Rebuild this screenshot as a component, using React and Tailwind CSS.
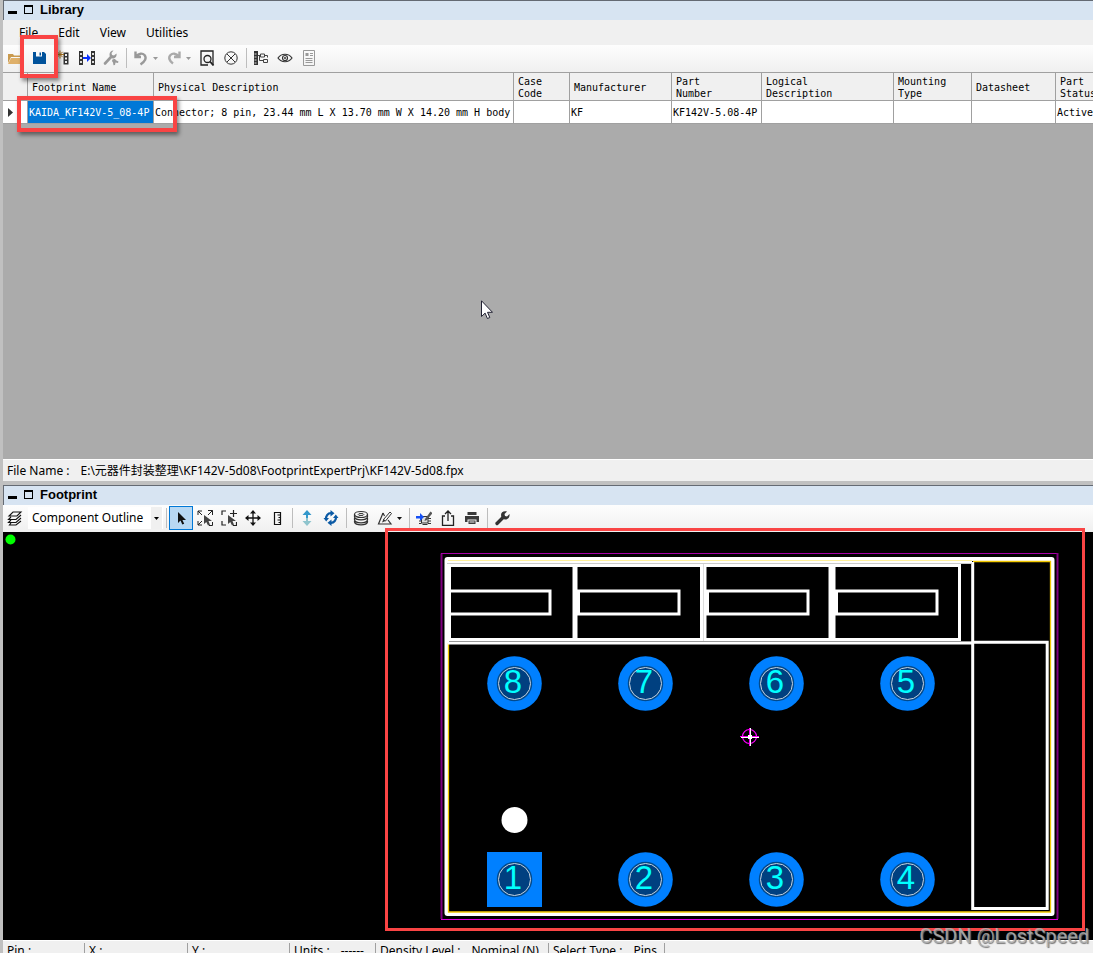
import { useState } from 'react';
import clsx from 'clsx';

const columns = [
  { key: 'name', label: ['Footprint Name'], width: 'w-[126px]' },
  { key: 'description', label: ['Physical Description'], width: 'w-[360px]' },
  { key: 'caseCode', label: ['Case', 'Code'], width: 'w-[56px]' },
  { key: 'manufacturer', label: ['Manufacturer'], width: 'w-[102px]' },
  { key: 'partNumber', label: ['Part', 'Number'], width: 'w-[90px]' },
  { key: 'logical', label: ['Logical', 'Description'], width: 'w-[132px]' },
  { key: 'mounting', label: ['Mounting', 'Type'], width: 'w-[78px]' },
  { key: 'datasheet', label: ['Datasheet'], width: 'w-[84px]' },
  { key: 'status', label: ['Part', 'Status'], width: 'w-[80px]' },
];

const rows = [
  {
    name: 'KAIDA_KF142V-5_08-4P',
    description: 'Connector; 8 pin, 23.44 mm L X 13.70 mm W X 14.20 mm H body',
    manufacturer: 'KF',
    partNumber: 'KF142V-5.08-4P',
    status: 'Active',
  },
];

// x, y are pad centres in canvas units
const pads = [
  { pin: '8', x: 514.5, y: 683.5 },
  { pin: '7', x: 645.5, y: 683.5 },
  { pin: '6', x: 776.5, y: 683.5 },
  { pin: '5', x: 907.5, y: 683.5 },
  { pin: '1', x: 514.5, y: 879.5, square: true },
  { pin: '2', x: 645.5, y: 879.5 },
  { pin: '3', x: 776.5, y: 879.5 },
  { pin: '4', x: 907.5, y: 879.5 },
];

const cells = [
  { x: 449.5, w: 124.5, tab: 449.5, tabW: 100.5 },
  { x: 576, w: 125.5, tab: 578.5, tabW: 100.5 },
  { x: 705, w: 125, tab: 707.5, tabW: 100.5 },
  { x: 834, w: 125.5, tab: 836.5, tabW: 100.5 },
];

function Icon({ children, className }) {
  return (
    <svg viewBox="0 0 16 16" className={clsx('h-4 w-4 shrink-0', className)} fill="none" aria-hidden="true">
      {children}
    </svg>
  );
}

const icons = {
  open: (
    <>
      <path d="M1 4h5l1 1.500h6V7H4L1 13z" fill="#c99a4e" />
      <path d="M4 8h12l-3 6H1z" fill="#dfb06a" />
    </>
  ),
  save: <path d="M2 2h11l2 2v10H2zM5 2v4.500h6V2zM8.500 2.500v3h1.500v-3z" fill="#00529b" fillRule="evenodd" />,
  newLib: (
    <>
      <path d="M8.500 2.500h5v12h-5z" fill="#333" />
      <path d="M10 4h2v2h-2zM10 7.500h2v2h-2zM10 11h2v2h-2z" fill="#eee" />
      <path d="M5 .5v8M1 4.500h8M2.300 1.800l5.400 5.400M7.700 1.800L2.300 7.200" stroke="#a8701c" />
    </>
  ),
  match: (
    <>
      <path d="M0 1h4v14H0zM12 1h4v14h-4z" fill="#333" />
      <path d="M1 3h2v2H1zM1 7h2v2H1zM1 11h2v2H1zM13 3h2v2h-2zM13 7h2v2h-2zM13 11h2v2h-2z" fill="#ddd" />
      <path d="M4 7h4V4l4 4-4 4V9H4z" fill="#0a32ff" />
    </>
  ),
  fix: (
    <>
      <path d="M2 13.500L8 7" stroke="#999" strokeWidth="2.600" strokeLinecap="round" />
      <path d="M10.500.5L8.500 3l.5 2 2 .5 2.500-2c.5 2.500-1 5-3.500 5S6.500 6.500 6.500 4.500 8 .5 10.500.5z" fill="#999" />
      <path d="M9.500 9.500c1.500-1 3-.5 3.500.8l2.500 1.200-.5 1.500-2.500-.5-.5 2.500-1.500.3-.5-2.800c-1-.8-1.200-2-.5-3z" fill="#999" />
    </>
  ),
  undo: <path d="M2.500 1.500V7H8M3 6.500C6 3 9.500 3 11.500 5c2.500 3 .5 6.500-4 9.500" stroke="#999" strokeWidth="2.400" />,
  redo: <path d="M13.500 1.500V7H8M13 6.500C10 3 6.500 3 4.500 5 2 7.500 3.500 11 7 13.500" stroke="#aaa" strokeWidth="2.400" />,
  preview: (
    <>
      <path d="M9 15H2V1h12v14" stroke="#222" strokeWidth="1.300" />
      <circle cx="8.500" cy="9" r="3.500" stroke="#222" strokeWidth="1.300" />
      <path d="M11 11.500l3.500 4" stroke="#222" strokeWidth="1.800" />
    </>
  ),
  cancel: (
    <>
      <circle cx="8" cy="8" r="6.200" stroke="#333" />
      <path d="M4 4l8 8M12 4l-8 8" stroke="#333" />
    </>
  ),
  tree: (
    <>
      <path d="M1 1h4v14H1z" fill="#333" />
      <path d="M1.500 4h2M1.500 7h2M1.500 10h2M1.500 13h2" stroke="#ddd" />
      <path d="M5 5.500h3M6.500 5.500v5H10M7.500 4h4v3h-4zM10.500 9.500h4v3h-4zM11.500 5.500h3v2" stroke="#444" />
    </>
  ),
  view: (
    <>
      <path d="M1 8c3.500-5 10.500-5 14 0-3.500 5-10.500 5-14 0z" stroke="#333" strokeWidth="1.200" />
      <circle cx="8" cy="8" r="2.500" stroke="#333" strokeWidth="1.200" />
      <circle cx="8" cy="8" r="1" fill="#333" />
    </>
  ),
  report: (
    <>
      <path d="M2.500.5h11v15h-11z" stroke="#999" />
      <path d="M4.500 3h3v3h-3z" fill="#999" />
      <path d="M9 3.500h3M9 5.500h3M4.500 8.500h7M4.500 10.500h7M4.500 12.500h7" stroke="#999" />
    </>
  ),
  layers: (
    <path d="M6 2h8l-4 4H2zM4 7L1.500 9.500H9L14 5M4 10l-2.500 2.500H9L14 8M4 13l-1.500 2H9L14 11" stroke="#111" strokeWidth="1.100" />
  ),
  pointer: <path d="M5 2v11l2.500-2.500L9.300 14.500l1.900-.8-1.800-3.800H13z" fill="#111" />,
  zoomAll: (
    <>
      <path d="M5 1H1v4M1 1l4 4M11 .5h4.500V5M15.500.5L11 5M1 11v4h4M1 15l4-4M12 15.500h3.500V12" stroke="#222" />
      <path d="M7 5v9l2.300-2L11 15.500l2-.8L11.500 11H15z" fill="#444" />
    </>
  ),
  zoomWindow: (
    <>
      <path d="M5 1H1v4M1 11v4h4M12 15.500h3.500V12M12.500 0v7M9 3.500h7" stroke="#222" strokeWidth="1.200" />
      <path d="M7 5v9l2.300-2L11 15.500l2-.8L11.500 11H15z" fill="#444" />
    </>
  ),
  pan: (
    <>
      <path d="M8 2v12M2 8h12" stroke="#111" strokeWidth="1.300" />
      <path d="M8 0l3 3.500H5zM8 16l-3-3.500h6zM0 8l3.500-3v6zM16 8l-3.500 3V5z" fill="#111" />
    </>
  ),
  ruler: <path d="M5.500 2.500h6v12h-6zM8.500 5h3M9.500 7.500h2M8.500 10h3M9.500 12.500h2" stroke="#111" strokeWidth="1.200" />,
  vertical: (
    <>
      <path d="M8 0l4.500 5H9v3H7V5H3.500z" fill="#3498cb" />
      <path d="M8 16l-4.500-5H7V8h2v3h3.500z" fill="#8fc4cd" />
    </>
  ),
  refresh: (
    <>
      <path d="M3.200 9.500a5 5 0 0 1 5.300-6.300M12.800 6.500a5 5 0 0 1-5.300 6.300" stroke="#0b5aa5" strokeWidth="2.200" />
      <path d="M7.500 0l4 3.200-4 3.300zM8.500 16l-4-3.200 4-3.300zM.5 8h5.500L3.200 11.500zM15.500 8H10l2.800-3.500z" fill="#0b5aa5" />
    </>
  ),
  stack: (
    <>
      <ellipse cx="8" cy="4.500" rx="6.500" ry="3" stroke="#333" strokeWidth="1.200" />
      <ellipse cx="8" cy="4.500" rx="2.800" ry="1" stroke="#333" />
      <path d="M1.500 4.500v2.500c1 3.800 12 3.800 13 0V4.500M1.500 8v2c1 3.800 12 3.800 13 0V8M1.500 11v1c1 3.800 12 3.800 13 0v-1" stroke="#333" strokeWidth="1.200" />
    </>
  ),
  draft: (
    <>
      <path d="M6 3L1.500 14H14l-3-4M6 3l1.500 3" stroke="#333" strokeWidth="1.200" />
      <path d="M6.500 9.500L13 2l1.500 1.500L8.500 11z" stroke="#333" />
      <path d="M6.500 9L5 12.500 8.500 11z" fill="#333" />
    </>
  ),
  place: (
    <>
      <path d="M5.500 6.500h6.500v6.500H5.500z" fill="#ddd" stroke="#333" />
      <path d="M12 8.500h3M12 11h3M3 11h2.500M3 13.500h2.500M12 13.500h3M6.500 14.500h5" stroke="#333" />
      <path d="M0 6h4V3l4 4-4 4V8.500H0z" fill="#1550f5" />
      <path d="M9 9l5.500-7.500L16.500 3 11 10l-2.500 1z" fill="#555" />
    </>
  ),
  exportIcon: <path d="M5 6H2.500v9.500h11V6H11M8 11V1.500M5 4l3-3 3 3" stroke="#222" strokeWidth="1.300" />,
  print: (
    <>
      <path d="M3.500 2h9v3h-9zM1 6h14v6h-2.500v-2.500h-9V12H1z" fill="#3a3a3a" />
      <path d="M4.500 10.500h7v3.500h-7z" fill="#3a3a3a" />
      <path d="M5.500 12h5" stroke="#eee" />
    </>
  ),
  wrench: (
    <>
      <path d="M3 13.500l6-6" stroke="#333" strokeWidth="3.400" strokeLinecap="round" />
      <path d="M13 1.500L10.500 4l.5 2 2 .5 2.500-2.500c.5 3-1.500 5.500-4 5.500S7 7.500 7 5s2.500-4.500 6-3.500z" fill="#333" />
    </>
  ),
};

function Caret({ className }) {
  return (
    <svg viewBox="0 0 5 3" className={clsx('h-[3px] w-[5px]', className)} aria-hidden="true">
      <path d="M0 0h5L2.500 3z" fill="currentColor" />
    </svg>
  );
}

function ToolButton({ icon, label, active = false, menu = false, muted = false }) {
  return (
    <button
      type="button"
      title={label}
      aria-label={label}
      className={clsx(
        'flex h-6 shrink-0 items-center',
        menu ? 'w-[33px] gap-1 pl-1' : 'w-6 justify-center',
        active && 'border border-[#0078d7] bg-[#b8d8f3]'
      )}
    >
      <Icon>{icons[icon]}</Icon>
      {menu && <Caret className={muted ? 'text-[#999]' : 'text-[#111]'} />}
    </button>
  );
}

function Separator() {
  return (
    <span className="flex w-[6px] shrink-0 justify-center">
      <span className="h-5 w-px bg-[#bdbdbd]" />
    </span>
  );
}

function TitleBar({ title }) {
  return (
    <header className="flex h-5 items-center border-t border-l border-[#646a73] bg-[#d7e4f2] pb-[2px] pl-1">
      <button type="button" aria-label={`Minimize ${title}`} className="flex h-2 w-4 items-end">
        <span className="h-[3px] w-[9px] bg-black" />
      </button>
      <button type="button" aria-label={`Maximize ${title}`} className="mb-px h-[9px] w-[9px] border border-t-2 border-black" />
      <h2 className="ml-[7px] font-['Liberation_Sans',sans-serif] text-[13px] leading-4 font-bold">{title}</h2>
    </header>
  );
}

function Toolbar({ children }) {
  return (
    <div role="toolbar" className="flex h-[27px] items-center bg-linear-to-b from-[#fdfdfd] to-[#f0f0f0] pb-px">
      {children}
    </div>
  );
}

function LibraryTable() {
  return (
    <div className="overflow-hidden">
      <table className="w-[1133px] table-fixed border-separate border-spacing-0 font-['DejaVu_Sans_Mono',monospace] text-[10px] leading-3">
        <thead>
          <tr className="h-[29px] bg-[#f0f0f0] text-left">
            <th className="w-[25px] border-y border-r border-[#a0a0a0]" aria-label="Row" />
            {columns.map(col => (
              <th key={col.key} className={clsx('border-y border-r border-[#a0a0a0] p-0 pt-[2px] pl-1 font-normal', col.width)}>
                {col.label.map(line => (
                  <span key={line} className="block">{line}</span>
                ))}
              </th>
            ))}
          </tr>
        </thead>
        <tbody>
          {rows.map(row => (
            <tr key={row.name} className="h-[23px] bg-white">
              <td className="border-r border-b border-[#a0a0a0] p-0 pl-[5px]">
                <svg viewBox="0 0 5 9" className="h-[9px] w-[5px]" aria-hidden="true">
                  <path d="M0 0l5 4.500L0 9z" fill="#333" />
                </svg>
              </td>
              {columns.map(col => (
                <td
                  key={col.key}
                  className={clsx(
                    'overflow-hidden border-r border-b border-[#a0a0a0] p-0 pt-[2px] pl-px whitespace-nowrap',
                    col.key === 'name' && 'bg-[#0078d7] text-white'
                  )}
                >
                  {row[col.key]}
                </td>
              ))}
            </tr>
          ))}
        </tbody>
      </table>
    </div>
  );
}

function Pad({ pin, x, y, square }) {
  return (
    <g>
      {square ? (
        <rect x={x - 27.5} y={y - 27.5} width="55" height="55" fill="#0080ff" />
      ) : (
        <circle cx={x} cy={y} r="27.300" fill="#0080ff" />
      )}
      <circle cx={x} cy={y} r="17" fill="#004080" stroke="#024a8c" strokeWidth="1.500" />
      <circle cx={x} cy={y} r="16" stroke="#c8d4e0" fill="none" />
      <text
        x={x - 1.5}
        y={y + 9.5}
        textAnchor="middle"
        fill="#00ffff"
        className="font-['Liberation_Sans',sans-serif] text-[33px]"
      >
        {pin}
      </text>
    </g>
  );
}

function FootprintCanvas() {
  return (
    <svg viewBox="3 532 1090 408" preserveAspectRatio="xMinYMin meet" className="block h-[408px] w-full bg-black" fill="none">
      <circle cx="10.500" cy="539.500" r="5" fill="#00ff00" />

      {/* courtyard */}
      <path d="M441.500 919V553.500" stroke="#800080" strokeWidth="2" />
      <path d="M441 553.500h617" stroke="#a800a8" />
      <path d="M1057.500 553v366" stroke="#800080" strokeWidth="2" />
      <path d="M441 919.500h617" stroke="#e000e0" />

      {/* body outline */}
      <rect x="446.500" y="559" width="606" height="355" rx="1" stroke="#fff" strokeWidth="4" />
      <path d="M448 561h524" stroke="#fff" strokeWidth="4" />
      <path d="M448 560.500h524" stroke="#fff09a" />
      <path d="M973 561.500h77.500V912H448.500V643" stroke="#f2c800" strokeWidth="1.300" />
      <path d="M447 563.500h524" stroke="#ccc" />
      <path d="M448.500 565v78" stroke="#fff" strokeWidth="3" />

      {cells.map(cell => (
        <g key={cell.x} stroke="#fff" strokeWidth="3">
          <rect x={cell.x} y="565.500" width={cell.w} height="74" />
          <rect x={cell.tab} y="591" width={cell.tabW} height="23" />
        </g>
      ))}
      <path d="M703.500 564v77" stroke="#ddd" />
      <path d="M832 564v77M575 564v77" stroke="#fff" strokeWidth="2" />
      <path d="M449 641.500h523" stroke="#999" />
      <path d="M448 643.300h524" stroke="#fff" strokeWidth="2.500" />
      <path d="M972.700 562v346.500h74.500V642.200h-74.500" stroke="#fff" strokeWidth="3" />

      {pads.map(pad => (
        <Pad key={pad.pin} {...pad} />
      ))}
      <circle cx="514.500" cy="820" r="13" fill="#fff" />

      {/* origin marker */}
      <circle cx="749.500" cy="736.500" r="7" stroke="#f0f" strokeWidth="1.200" />
      <path d="M740 736.500h19M749.500 728v18" stroke="#f0f" />
      <path d="M741 737.500h18M750.500 728v18" stroke="#fff" />
      <path d="M748 735h4v4h-4z" fill="#fff" />
    </svg>
  );
}

function StatusCell({ label, value, width }) {
  return (
    <span className={clsx('flex h-[23px] shrink-0 gap-[11px] border-r border-[#a0a0a0] pl-1', width)}>
      <span>{label}</span>
      {value && <span>{value}</span>}
    </span>
  );
}

export default function App() {
  const [layer, setLayer] = useState('Component Outline');

  return (
    <main className="relative h-screen overflow-hidden bg-[#c0c0c0] pl-[3px] font-['Noto_Sans','Noto_Sans_CJK_SC',sans-serif] text-[12px] leading-4 text-black">
      <section className="relative">
        <TitleBar title="Library" />
        <nav className="flex h-[25px] items-center gap-5 bg-[#f0f0f0] pl-4">
          {['File', 'Edit', 'View', 'Utilities'].map(item => (
            <button key={item} type="button">{item}</button>
          ))}
        </nav>
        <Toolbar>
          <ToolButton icon="open" label="Open" />
          <ToolButton icon="save" label="Save" />
          <ToolButton icon="newLib" label="New footprint" />
          <ToolButton icon="match" label="Match" />
          <ToolButton icon="fix" label="Repair" />
          <Separator />
          <ToolButton icon="undo" label="Undo" menu muted />
          <ToolButton icon="redo" label="Redo" menu muted />
          <ToolButton icon="preview" label="Preview" />
          <ToolButton icon="cancel" label="Cancel" />
          <Separator />
          <ToolButton icon="tree" label="Columns" />
          <ToolButton icon="view" label="View" />
          <ToolButton icon="report" label="Report" />
        </Toolbar>
        <LibraryTable />
        <div className="h-[335px] bg-[#ababab]" />
        <div className="flex h-[22px] items-center gap-[11px] border-t border-white bg-[#f0f0f0] pl-1">
          <span>File Name :</span>
          <span>E:\元器件封装整理\KF142V-5d08\FootprintExpertPrj\KF142V-5d08.fpx</span>
        </div>

        {/* callouts */}
        <div className="pointer-events-none absolute top-[35px] left-[17px] h-[43px] w-[38px] border-4 border-[#f94444] shadow-[2px_3px_4px_rgba(0,0,0,0.45)]" />
        <div className="pointer-events-none absolute top-[96px] left-[14px] h-[36px] w-[160px] border-4 border-[#f94444] shadow-[2px_3px_4px_rgba(0,0,0,0.45)]" />
        <svg viewBox="0 0 12 20" className="pointer-events-none absolute top-[300px] left-[478px] h-5 w-3" aria-hidden="true">
          <path d="M.5.8v15.700l3.600-3.400 2.300 5.400 2.400-1-2.300-5.200h5z" fill="#fff" stroke="#223" />
        </svg>
      </section>

      <section className="mt-1">
        <TitleBar title="Footprint" />
        <Toolbar>
          <ToolButton icon="layers" label="Layers" />
          <div className="relative ml-px h-[22px] w-[135px] bg-white">
            <select
              aria-label="Layer"
              value={layer}
              onChange={e => setLayer(e.target.value)}
              className="h-full w-[117px] appearance-none overflow-hidden pl-1"
            >
              <option>Component Outline</option>
              <option>Assembly Outline</option>
            </select>
            <span className="pointer-events-none absolute top-0 right-px flex h-full w-[11px] items-center justify-center bg-[#f0f0f0]">
              <Caret />
            </span>
          </div>
          <Separator />
          <ToolButton icon="pointer" label="Select" active />
          <ToolButton icon="zoomAll" label="Zoom all" />
          <ToolButton icon="zoomWindow" label="Zoom window" />
          <ToolButton icon="pan" label="Pan" />
          <ToolButton icon="ruler" label="Measure" />
          <Separator />
          <ToolButton icon="vertical" label="Flip" />
          <ToolButton icon="refresh" label="Rotate" />
          <Separator />
          <ToolButton icon="stack" label="Padstack" />
          <ToolButton icon="draft" label="Drafting" menu />
          <Separator />
          <ToolButton icon="place" label="Place" />
          <ToolButton icon="exportIcon" label="Export" />
          <ToolButton icon="print" label="Print" />
          <Separator />
          <ToolButton icon="wrench" label="Settings" />
        </Toolbar>
        <div className="relative">
          <FootprintCanvas />
          <div className="pointer-events-none absolute -top-1 left-[382px] h-[403px] w-[700px] border-3 border-[#f94444]" />
        </div>
        <footer className="flex h-[26px] items-end border-t border-white bg-[#f0f0f0]">
          <StatusCell label="Pin :" width="w-[82px]" />
          <StatusCell label="X :" width="w-[103px]" />
          <StatusCell label="Y :" width="w-[102px]" />
          <StatusCell label="Units :" value="------" width="w-[86px]" />
          <StatusCell label="Density Level :" value="Nominal (N)" width="w-[173px]" />
          <StatusCell label="Select Type :" value="Pins" width="w-[116px]" />
        </footer>
      </section>

      <p className="pointer-events-none absolute right-1 bottom-[5px] font-['Roboto',sans-serif] text-[20px] leading-6 text-[#b4b4b4]/80 [text-shadow:1px_1px_1px_#777]">
        CSDN @LostSpeed
      </p>
    </main>
  );
}
